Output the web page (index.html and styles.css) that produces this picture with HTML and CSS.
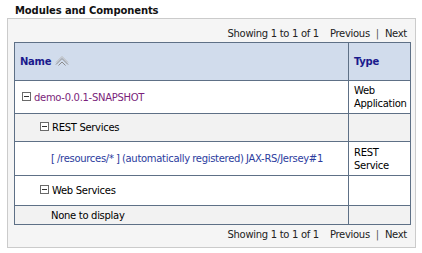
FILE: index.html
```html
<!DOCTYPE html>
<html>
<head>
<meta charset="utf-8">
<link rel="stylesheet" href="styles.css">
</head>
<body>
<h2 class="title">Modules and Components</h2>
<div class="panel">
  <div class="pager pager-top">
    <span>Showing 1 to 1 of 1</span>
    <span class="prev">Previous</span>
    <span class="sep">|</span>
    <span>Next</span>
  </div>
  <table class="grid">
    <colgroup><col class="c1"><col class="c2"></colgroup>
    <thead>
      <tr class="r-head">
        <th class="name-h">Name <svg class="sort" width="14" height="10" viewBox="0 0 14 10"><path d="M1 8.5 L7 2.5 L13 8.5" fill="none" stroke="#8a8a8a" stroke-width="1"/><path d="M3.5 9.5 L7 6 L10.5 9.5" fill="none" stroke="#8a8a8a" stroke-width="1"/><path d="M1 6.5 L7 0.5 L13 6.5" fill="none" stroke="#b8b8b8" stroke-width="1"/></svg></th>
        <th class="type-h">Type</th>
      </tr>
    </thead>
    <tbody>
      <tr class="r-app">
        <td class="lv0"><span class="tog"></span><span class="visited">demo-0.0.1-SNAPSHOT</span></td>
        <td class="type">Web<br>Application</td>
      </tr>
      <tr class="r-grp alt">
        <td class="lv1"><span class="tog"></span>REST Services</td>
        <td class="type"></td>
      </tr>
      <tr class="r-item">
        <td class="lv2"><span class="link">[ /resources/* ] (automatically registered) JAX-RS/Jersey#1</span></td>
        <td class="type">REST<br>Service</td>
      </tr>
      <tr class="r-grp2">
        <td class="lv1"><span class="tog"></span>Web Services</td>
        <td class="type"></td>
      </tr>
      <tr class="r-none alt">
        <td class="lv2">None to display</td>
        <td class="type"></td>
      </tr>
    </tbody>
  </table>
  <div class="pager pager-bottom">
    <span>Showing 1 to 1 of 1</span>
    <span class="prev">Previous</span>
    <span class="sep">|</span>
    <span>Next</span>
  </div>
</div>
</body>
</html>
```
FILE: styles.css
```css
html, body {
  margin: 0;
  padding: 0;
  background: #ffffff;
}
body {
  font-family: "DejaVu Sans", Verdana, sans-serif;
  font-size: 10px;
  letter-spacing: -0.3px;
  color: #000;
}
.title {
  margin: 0;
  padding: 4px 0 0 15px;
  height: 18px;
  box-sizing: border-box;
  font-size: 10px;
  font-weight: bold;
  letter-spacing: -0.1px;
  line-height: 13px;
  color: #111;
}
.panel {
  margin: 0 6px 0 7px;
  border: 1px solid #cbcbcb;
  background: #f5f5f5;
  padding: 0 5px 0 6px;
  height: 228px;
  display: flex;
  flex-direction: column;
}
.pager {
  display: flex;
  justify-content: flex-end;
  align-items: flex-start;
  padding-right: 3px;
  color: #222;
  line-height: 13px;
  box-sizing: border-box;
}
.pager-top {
  height: 23px;
  padding-top: 8px;
}
.pager-bottom {
  flex: 1;
  padding-top: 3px;
}
.prev {
  margin-left: 11px;
}
.sep {
  margin: 0 6px;
  color: #555;
}
.grid {
  width: 396px;
  border-collapse: collapse;
  table-layout: fixed;
  background: #fff;
  flex: none;
}
.c1 { width: 334px; }
.c2 { width: 62px; }
.grid th, .grid td {
  border: 1px solid #5e7086;
  padding: 0 0 0 5px;
  text-align: left;
  line-height: 13px;
}
.grid th {
  background: #d1dcec;
  color: #1a1a8c;
  font-weight: bold;
  height: 37px;
}
.sort {
  vertical-align: -1px;
  margin-left: 1px;
}
.r-app td { height: 32px; }
.r-grp td { height: 27px; }
.r-item td { height: 33px; }
.r-grp2 td { height: 29px; }
.r-none td { height: 18px; }
.alt td { background: #f2f2f2; }
.lv0 { padding-left: 7px !important; }
.lv1 { padding-left: 25px !important; }
.lv2 { padding-left: 36px !important; }
.type { vertical-align: middle; }
.tog {
  display: inline-block;
  width: 7px;
  height: 7px;
  border: 1px solid #6a6a6a;
  margin-right: 3px;
  vertical-align: 0;
  position: relative;
  background: #fff;
}
.tog::after {
  content: "";
  position: absolute;
  left: 1px;
  top: 3px;
  width: 5px;
  height: 1px;
  background: #333;
}
.visited { color: #7b1f7b; }
.link {
  color: #2b3c9e;
  word-spacing: -0.5px;
}
```
